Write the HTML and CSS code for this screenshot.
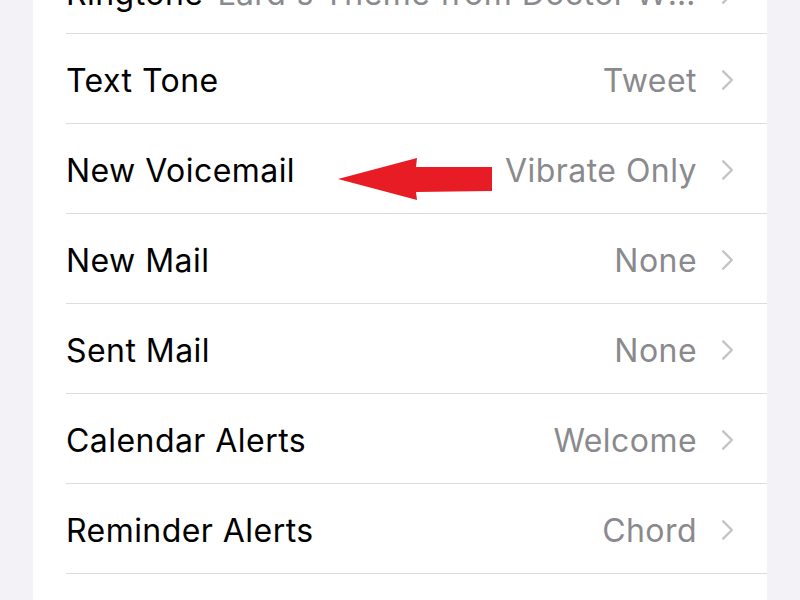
FILE: index.html
```html
<!DOCTYPE html>
<html lang="en">
<head>
    <meta charset="UTF-8">
    <meta name="viewport" content="width=device-width, initial-scale=1.0">
    <title>Sounds &amp; Haptics</title>
    <link rel="stylesheet" href="styles.css">
</head>
<body>
    <div class="screen">
        <ul class="settings-list">
            <li class="row row-partial">
                <span class="label">Ringtone</span>
                <span class="value truncate">Lard's Theme from Doctor Wh…</span>
                <svg class="chevron" viewBox="0 0 12 20"><path d="M2 2 L10 10 L2 18"/></svg>
            </li>
            <li class="row">
                <span class="label">Text Tone</span>
                <span class="value">Tweet</span>
                <svg class="chevron" viewBox="0 0 12 20"><path d="M2 2 L10 10 L2 18"/></svg>
            </li>
            <li class="row">
                <span class="label">New Voicemail</span>
                <span class="value">Vibrate Only</span>
                <svg class="chevron" viewBox="0 0 12 20"><path d="M2 2 L10 10 L2 18"/></svg>
            </li>
            <li class="row">
                <span class="label">New Mail</span>
                <span class="value">None</span>
                <svg class="chevron" viewBox="0 0 12 20"><path d="M2 2 L10 10 L2 18"/></svg>
            </li>
            <li class="row">
                <span class="label">Sent Mail</span>
                <span class="value">None</span>
                <svg class="chevron" viewBox="0 0 12 20"><path d="M2 2 L10 10 L2 18"/></svg>
            </li>
            <li class="row">
                <span class="label">Calendar Alerts</span>
                <span class="value">Welcome</span>
                <svg class="chevron" viewBox="0 0 12 20"><path d="M2 2 L10 10 L2 18"/></svg>
            </li>
            <li class="row">
                <span class="label">Reminder Alerts</span>
                <span class="value">Chord</span>
                <svg class="chevron" viewBox="0 0 12 20"><path d="M2 2 L10 10 L2 18"/></svg>
            </li>
            <li class="row">
                <span class="label">AirDrop</span>
                <span class="value">Pulse</span>
                <svg class="chevron" viewBox="0 0 12 20"><path d="M2 2 L10 10 L2 18"/></svg>
            </li>
        </ul>

        <!-- red annotation arrow pointing at New Voicemail -->
        <svg class="annotation" viewBox="0 0 160 50" width="160" height="50">
            <path d="M8 29 L87 8 L86 17 L162 17 L162 41 L86 42 L87 50 Z"/>
        </svg>
    </div>
</body>
</html>
```

FILE: styles.css
```css
body {
    margin: 0;
    background-color: #f2f2f7;
    font-family: 'Inter', 'Liberation Sans', sans-serif;
    overflow: hidden;
}

.screen {
    position: relative;
    width: 800px;
    height: 600px;
    overflow: hidden;
}

.settings-list {
    list-style: none;
    margin: -56px 33px 0 33px;
    padding: 0;
    background-color: #ffffff;
}

.row {
    display: flex;
    align-items: center;
    height: 90px;
    margin-left: 33px;
    padding-top: 3px;
    padding-right: 33px;
    border-bottom: 1.5px solid #dcdce0;
    box-sizing: border-box;
}

.row-partial {
    padding-top: 10px;
}

.label {
    flex-shrink: 0;
    font-size: 32px;
    letter-spacing: 0.45px;
    color: #000000;
}

.value {
    flex: 1;
    text-align: right;
    font-size: 32px;
    letter-spacing: 0.45px;
    color: #8a8a8e;
    margin-right: 24px;
}

.truncate {
    white-space: nowrap;
    overflow: hidden;
    text-overflow: ellipsis;
    margin-left: 14px;
}

.chevron {
    width: 13px;
    height: 22px;
    flex-shrink: 0;
    fill: none;
    stroke: #c4c4c7;
    stroke-width: 2.2;
    stroke-linecap: round;
    stroke-linejoin: round;
}

.annotation {
    position: absolute;
    left: 330px;
    top: 150px;
    overflow: visible;
}

.annotation path {
    fill: #e81c24;
}
```
